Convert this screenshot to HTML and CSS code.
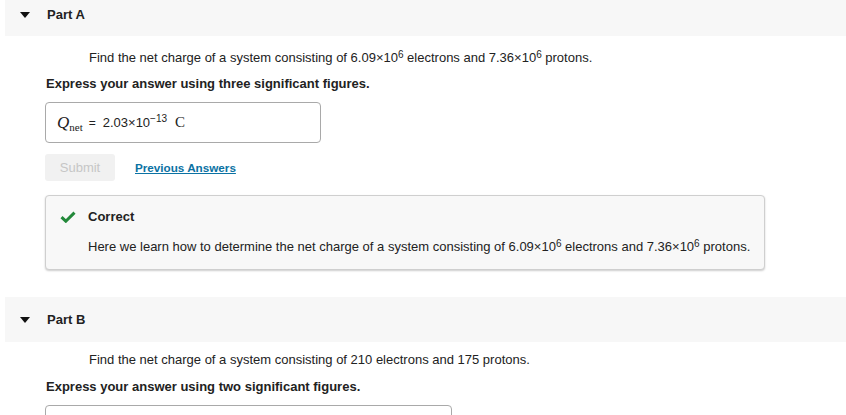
FILE: index.html
```html
<!DOCTYPE html>
<html lang="en">
<head>
    <meta charset="UTF-8">
    <title>Net Charge</title>
    <link rel="stylesheet" href="styles.css">
</head>
<body>

    <!-- Part A -->
    <div class="part part-a">
        <div class="part-header">
            <span class="caret"></span>
            <span class="part-title">Part A</span>
        </div>
        <div class="part-body">
            <p class="problem">Find the net charge of a system consisting of 6.09×10<sup>6</sup> electrons and 7.36×10<sup>6</sup> protons.</p>
            <p class="instruction">Express your answer using three significant figures.</p>
            <div class="answer-box">
                <span class="math-var">Q</span><span class="math-sub">net</span>
                <span class="eq">=</span>
                <span class="value">2.03×10<sup>−13</sup></span>
                <span class="unit">C</span>
            </div>
            <div class="actions">
                <button class="submit" disabled>Submit</button>
                <a href="#" class="prev-link">Previous Answers</a>
            </div>
            <div class="feedback">
                <div class="feedback-title">
                    <svg class="check" width="16" height="12" viewBox="0 0 16 12">
                        <path d="M1.5 6.2 L5.8 10.2 L14.5 1.6" fill="none" stroke="#23893a" stroke-width="3"/>
                    </svg>
                    <span>Correct</span>
                </div>
                <p class="feedback-text">Here we learn how to determine the net charge of a system consisting of 6.09×10<sup>6</sup> electrons and 7.36×10<sup>6</sup> protons.</p>
            </div>
        </div>
    </div>

    <!-- Part B -->
    <div class="part part-b">
        <div class="part-header">
            <span class="caret"></span>
            <span class="part-title">Part B</span>
        </div>
        <div class="part-body">
            <p class="problem">Find the net charge of a system consisting of 210 electrons and 175 protons.</p>
            <p class="instruction">Express your answer using two significant figures.</p>
            <div class="answer-box wide"></div>
        </div>
    </div>

</body>
</html>
```

FILE: styles.css
```css
body {
    margin: 0;
    font-family: "Liberation Sans", Arial, sans-serif;
    font-size: 13px;
    color: #222;
    background: #fff;
    overflow: hidden;
}
p {
    margin: 0;
}
.part-header {
    margin-left: 5px;
    height: 45px;
    background: #f7f7f7;
    display: flex;
    align-items: center;
}
.part-a .part-header {
    margin-top: -9px;
    padding-top: 2px;
    height: 43px;
}
.part-b {
    margin-top: 27px;
}
.caret {
    width: 0;
    height: 0;
    border-left: 5px solid transparent;
    border-right: 5px solid transparent;
    border-top: 6px solid #111;
    margin-left: 15px;
    margin-right: 17px;
}
.part-title {
    font-weight: bold;
    font-size: 13px;
}
.part-body {
    padding-left: 45px;
}
.problem {
    margin-top: 14px;
    padding-left: 44px;
    line-height: 16px;
}
.part-b .problem {
    margin-top: 10px;
}
.instruction {
    margin-top: 10px;
    padding-left: 1px;
    font-weight: bold;
    line-height: 16px;
}
.part-b .instruction {
    margin-top: 11px;
}
sup {
    font-size: 10px;
    line-height: 0;
    vertical-align: 4px;
}
.answer-box {
    margin-top: 10px;
    width: 263px;
    height: 39px;
    border: 1px solid #a9a9a9;
    border-radius: 4px;
    display: flex;
    align-items: center;
    padding-left: 11px;
    box-sizing: content-box;
}
.answer-box.wide {
    width: 394px;
}
.math-var {
    font-family: "Liberation Serif", serif;
    font-style: italic;
    font-size: 17px;
}
.math-sub {
    font-family: "Liberation Serif", serif;
    font-size: 11px;
    position: relative;
    top: 4px;
}
.eq {
    margin: 0 7px 0 6px;
    font-size: 12px;
}
.value sup {
    vertical-align: 5px;
}
.unit {
    font-family: "Liberation Serif", serif;
    font-size: 15px;
    margin-left: 8px;
}
.actions {
    margin-top: 11px;
    display: flex;
    align-items: center;
}
.submit {
    width: 70px;
    height: 27px;
    border: none;
    border-radius: 3px;
    background: #f1f1f1;
    color: #c6c6c6;
    font-family: "Liberation Sans", Arial, sans-serif;
    font-size: 13px;
    padding: 0;
}
.prev-link {
    margin-left: 20px;
    color: #0b72a3;
    font-weight: bold;
    font-size: 11.7px;
}
.feedback {
    margin-top: 14px;
    width: 718px;
    border: 1px solid #cfcfcf;
    border-radius: 4px;
    background: #f8f8f8;
    box-shadow: 0 1px 2px rgba(0, 0, 0, 0.2);
    padding: 13px 0 14px 0;
}
.feedback-title {
    display: flex;
    align-items: center;
    font-weight: bold;
    line-height: 16px;
}
.check {
    margin-left: 14px;
    margin-right: 12px;
}
.feedback-text {
    margin-top: 14px;
    padding-left: 42px;
    line-height: 16px;
}
```
